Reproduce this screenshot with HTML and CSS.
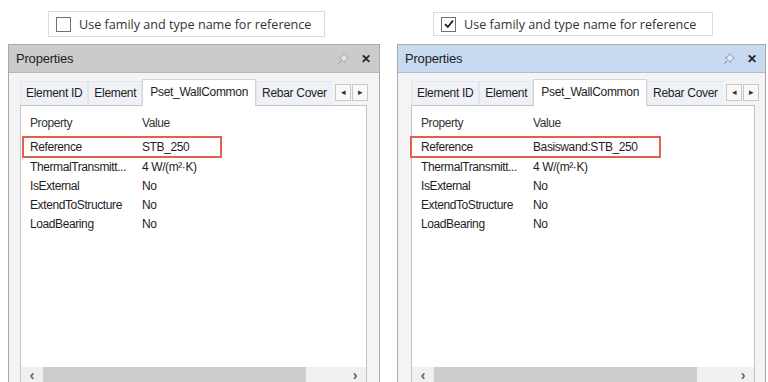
FILE: index.html
```html
<!DOCTYPE html>
<html lang="en">
<head>
    <meta charset="UTF-8">
    <meta name="viewport" content="width=device-width, initial-scale=1.0">
    <title>Properties - family and type name</title>
    <link rel="stylesheet" href="styles.css">
</head>
<body>

    <div class="page">

        <div class="col col-left">
            <div class="option">
                <span class="check"></span>
                <span class="option-text">Use family and type name for reference</span>
            </div>

            <div class="panel">
                <div class="titlebar">
                    <span class="title">Properties</span>
                    <svg class="pin" width="13" height="13" viewBox="0 0 12 12">
                        <path d="M6 1.5 L10.5 6 L9 6.5 L7 8.5 L7.2 10 L2 4.8 L3.5 5 L5.5 3 Z" fill="#e2e2e2" stroke="#a8a8a8" stroke-width="0.9"/>
                        <path d="M3.8 8.2 L1.2 10.8" stroke="#a8a8a8" stroke-width="1.1"/>
                    </svg>
                    <span class="close">&#x2715;</span>
                </div>
                <div class="tabs">
                    <span class="tab">Element ID</span>
                    <span class="tab">Element</span>
                    <span class="tab active">Pset_WallCommon</span>
                    <span class="tab cut">Rebar Cover</span>
                    <span class="arrows"><span class="arr">&#9666;</span><span class="arr">&#9656;</span></span>
                </div>
                <div class="tab-body">
                    <div class="list">
                        <div class="row head"><span>Property</span><span>Value</span></div>
                        <div class="row mark"><span>Reference</span><span>STB_250</span></div>
                        <div class="row"><span>ThermalTransmitt...</span><span>4 W/(m²·K)</span></div>
                        <div class="row"><span>IsExternal</span><span>No</span></div>
                        <div class="row"><span>ExtendToStructure</span><span>No</span></div>
                        <div class="row"><span>LoadBearing</span><span>No</span></div>
                    </div>
                    <div class="hscroll">
                        <span class="sarrow">&#x2039;</span>
                        <span class="thumb"></span>
                        <span class="sarrow">&#x203A;</span>
                    </div>
                </div>
            </div>
        </div>

        <div class="col col-right">
            <div class="option">
                <span class="check on">
                    <svg width="12" height="12" viewBox="0 0 12 12">
                        <path d="M2 6.2 L4.8 9 L10 2.6" fill="none" stroke="#222" stroke-width="1.8"/>
                    </svg>
                </span>
                <span class="option-text">Use family and type name for reference</span>
            </div>

            <div class="panel panel-active">
                <div class="titlebar">
                    <span class="title">Properties</span>
                    <svg class="pin" width="13" height="13" viewBox="0 0 12 12">
                        <path d="M6 1.5 L10.5 6 L9 6.5 L7 8.5 L7.2 10 L2 4.8 L3.5 5 L5.5 3 Z" fill="#e4ebf3" stroke="#8e99a6" stroke-width="0.9"/>
                        <path d="M3.8 8.2 L1.2 10.8" stroke="#8e99a6" stroke-width="1.1"/>
                    </svg>
                    <span class="close">&#x2715;</span>
                </div>
                <div class="tabs">
                    <span class="tab">Element ID</span>
                    <span class="tab">Element</span>
                    <span class="tab active">Pset_WallCommon</span>
                    <span class="tab cut">Rebar Cover</span>
                    <span class="arrows"><span class="arr">&#9666;</span><span class="arr">&#9656;</span></span>
                </div>
                <div class="tab-body">
                    <div class="list">
                        <div class="row head"><span>Property</span><span>Value</span></div>
                        <div class="row mark mark-wide"><span>Reference</span><span>Basiswand:STB_250</span></div>
                        <div class="row"><span>ThermalTransmitt...</span><span>4 W/(m²·K)</span></div>
                        <div class="row"><span>IsExternal</span><span>No</span></div>
                        <div class="row"><span>ExtendToStructure</span><span>No</span></div>
                        <div class="row"><span>LoadBearing</span><span>No</span></div>
                    </div>
                    <div class="hscroll">
                        <span class="sarrow">&#x2039;</span>
                        <span class="thumb"></span>
                        <span class="sarrow">&#x203A;</span>
                    </div>
                </div>
            </div>
        </div>

    </div>

</body>
</html>
```

FILE: styles.css
```css
html {
    overflow: hidden;
}
body {
    margin: 0;
    background-color: #ffffff;
    font-family: "Liberation Sans", Arial, sans-serif;
    color: #1e1e1e;
}
.page {
    display: flex;
    gap: 17px;
    padding-left: 8px;
    height: 383px;
}
.col {
    display: flex;
    flex-direction: column;
}
.col-left {
    width: 372px;
}
.col-right {
    width: 369px;
}

/* checkbox option above each panel */
.option {
    display: flex;
    align-items: center;
    gap: 8px;
    margin-top: 11px;
    height: 26px;
    box-sizing: border-box;
    border: 1px solid #dadada;
    background-color: #ffffff;
    padding-left: 7px;
    font-family: "Open Sans", "Noto Sans", sans-serif;
    font-size: 12.6px;
    color: #333;
}
.col-left .option {
    margin-left: 40px;
    width: 277px;
}
.col-right .option {
    margin-left: 36px;
    width: 280px;
    margin-top: 12px;
    height: 24px;
}
.check {
    width: 13px;
    height: 13px;
    border: 1px solid #707070;
    background-color: #fff;
    display: flex;
    align-items: center;
    justify-content: center;
}

/* dock panel */
.panel {
    flex: 1;
    margin-top: 7px;
    display: flex;
    flex-direction: column;
    border: 1px solid #a9a9a9;
    border-bottom: none;
    background-color: #f4f4f4;
    padding: 0 12px 0 11px;
}
.col-right .panel {
    margin-top: 8px;
    padding: 0 10px 0 13px;
}
.titlebar {
    display: flex;
    align-items: center;
    height: 27px;
    margin: 0 -12px 0 -11px;
    padding: 0 8px 0 7px;
    background-color: #cbcbcb;
    border-bottom: 1px solid #b8b8b8;
    font-size: 13px;
    letter-spacing: -0.2px;
}
.col-right .titlebar {
    margin: 0 -10px 0 -13px;
    background-color: #c7daf0;
    border-bottom-color: #a9bfd8;
}
.title {
    flex: 1;
}
.pin {
    margin-right: 11px;
}
.close {
    font-size: 12px;
    font-weight: bold;
    color: #222;
}

/* tabs */
.tabs {
    display: flex;
    align-items: flex-end;
    margin-top: 6px;
    height: 26px;
    font-size: 12px;
    letter-spacing: -0.3px;
    position: relative;
    z-index: 1;
}
.tab {
    height: 24px;
    line-height: 22px;
    padding: 0 5px;
    background-color: #eef1f5;
    border: 1px solid #e2e5ea;
    border-bottom: none;
    box-sizing: border-box;
    white-space: nowrap;
}
.tab.active {
    height: 27px;
    line-height: 24px;
    padding: 0 7px;
    background-color: #ffffff;
    border-color: #d3d3d3;
    margin-bottom: -1px;
}
.tab.cut {
    width: 76px;
    overflow: hidden;
    padding-right: 0;
    border-right: none;
}
.arrows {
    display: flex;
    gap: 1px;
    margin-left: 3px;
    margin-right: -4px;
    align-self: center;
}
.arr {
    width: 14px;
    height: 15px;
    border: 1px solid #c8c8c8;
    background-color: #f8f8f8;
    font-size: 9px;
    line-height: 15px;
    text-align: center;
    color: #333;
}

/* list inside the tab */
.tab-body {
    flex: 1;
    display: flex;
    flex-direction: column;
    background-color: #ffffff;
    border: 1px solid #c4c4c4;
}
.list {
    flex: 1;
    padding-top: 7px;
    font-size: 12px;
    letter-spacing: -0.4px;
}
.row {
    display: grid;
    grid-template-columns: 112px 1fr;
    height: 19px;
    line-height: 19px;
    padding-left: 9px;
}
.row.head {
    height: 20px;
    line-height: 20px;
    color: #333;
}
.row.mark {
    margin: 3px 0 0 1px;
    width: 200px;
    height: 22px;
    line-height: 18px;
    box-sizing: border-box;
    border: 2px solid #e2604f;
    padding-left: 6px;
}
.row.mark-wide {
    width: 251px;
    margin-left: -2px;
    padding-left: 9px;
}

/* horizontal scrollbar */
.hscroll {
    display: flex;
    align-items: center;
    height: 15px;
    background-color: #f0f0f0;
}
.sarrow {
    width: 22px;
    text-align: center;
    font-size: 14px;
    font-weight: bold;
    color: #606060;
    line-height: 14px;
}
.thumb {
    width: 263px;
    height: 15px;
    background-color: #cdcdcd;
    margin-right: auto;
}
```
